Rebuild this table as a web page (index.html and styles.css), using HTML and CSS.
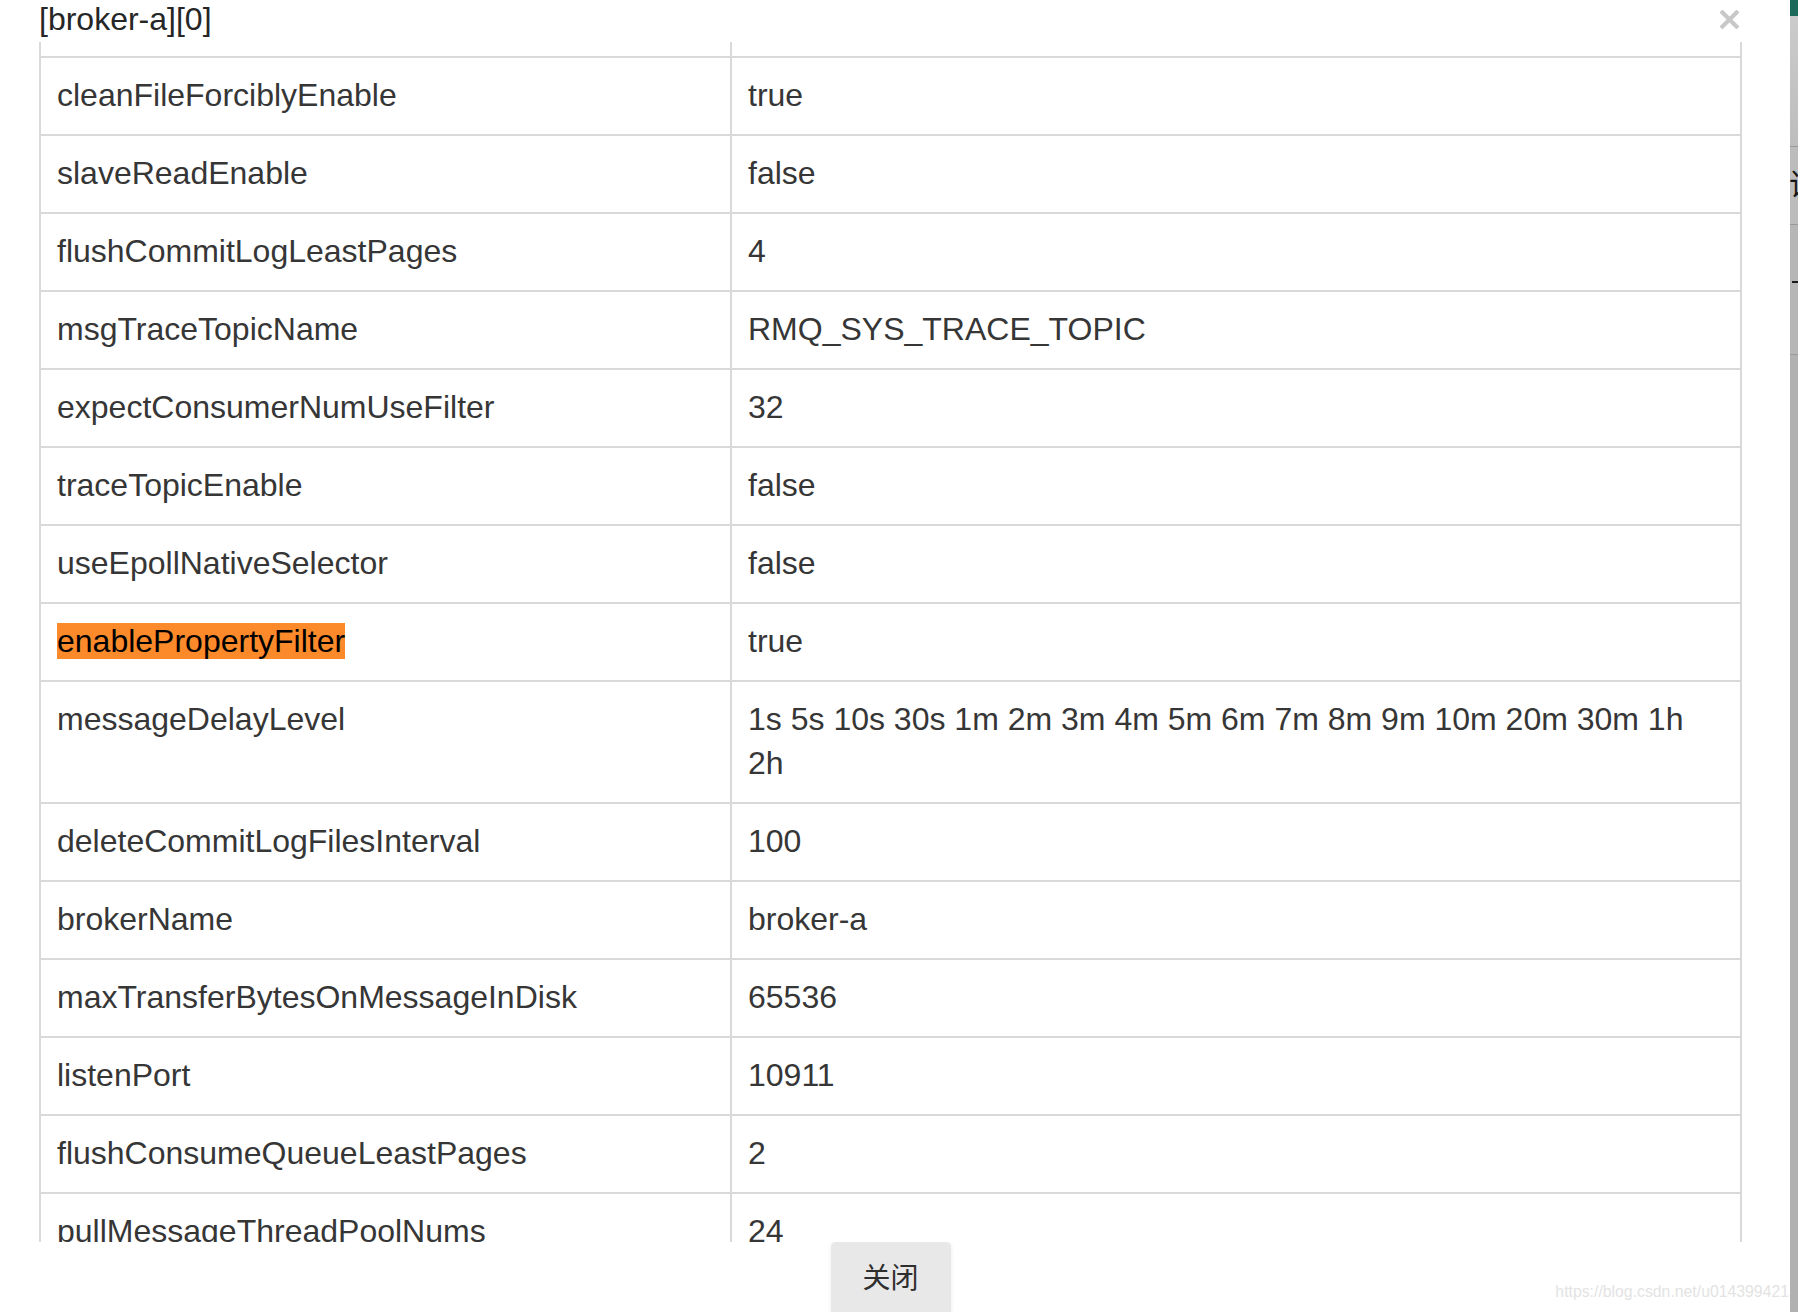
FILE: index.html
```html
<!DOCTYPE html>
<html lang="zh-CN">
<head>
<meta charset="utf-8">
<title>[broker-a][0]</title>
<link rel="stylesheet" href="styles.css">
</head>
<body>
<div class="screen">
  <div class="modal">
    <div class="modal-header">
      <h4 class="modal-title">[broker-a][0]</h4>
      <button class="close" type="button" aria-label="Close">
        <svg width="19" height="19" viewBox="0 0 19 19" aria-hidden="true">
          <path d="M2.5 2.5 L16.5 16.5 M16.5 2.5 L2.5 16.5" stroke="#c8c8c8" stroke-width="4.2" stroke-linecap="square" fill="none"/>
        </svg>
      </button>
    </div>
    <div class="modal-body">
      <table class="config-table">
        <tbody>
          <tr class="scrolled-edge"><td class="key"></td><td></td></tr>
          <tr><td class="key">cleanFileForciblyEnable</td><td>true</td></tr>
          <tr><td class="key">slaveReadEnable</td><td>false</td></tr>
          <tr><td class="key">flushCommitLogLeastPages</td><td>4</td></tr>
          <tr><td class="key">msgTraceTopicName</td><td>RMQ_SYS_TRACE_TOPIC</td></tr>
          <tr><td class="key">expectConsumerNumUseFilter</td><td>32</td></tr>
          <tr><td class="key">traceTopicEnable</td><td>false</td></tr>
          <tr><td class="key">useEpollNativeSelector</td><td>false</td></tr>
          <tr><td class="key"><mark class="hit">enablePropertyFilter</mark></td><td>true</td></tr>
          <tr><td class="key">messageDelayLevel</td><td>1s 5s 10s 30s 1m 2m 3m 4m 5m 6m 7m 8m 9m 10m 20m 30m 1h 2h</td></tr>
          <tr><td class="key">deleteCommitLogFilesInterval</td><td>100</td></tr>
          <tr><td class="key">brokerName</td><td>broker-a</td></tr>
          <tr><td class="key">maxTransferBytesOnMessageInDisk</td><td>65536</td></tr>
          <tr><td class="key">listenPort</td><td>10911</td></tr>
          <tr><td class="key">flushConsumeQueueLeastPages</td><td>2</td></tr>
          <tr><td class="key">pullMessageThreadPoolNums</td><td>24</td></tr>
        </tbody>
      </table>
    </div>
    <div class="modal-footer">
      <button class="btn" type="button">关闭</button>
    </div>
    <div class="watermark">https://blog.csdn.net/u014399421</div>
  </div>
  <div class="page-edge" aria-hidden="true">
    <div class="edge-nav"></div>
    <div class="edge-cell edge-light"></div>
    <div class="edge-cell edge-mid"><span class="edge-char">词</span></div>
    <div class="edge-cell edge-low"><span class="edge-dash"></span></div>
    <div class="edge-rest"></div>
  </div>
</div>
</body>
</html>
```

FILE: styles.css
```css
* {
  box-sizing: border-box;
}

html, body {
  margin: 0;
  padding: 0;
  background: #ffffff;
}

body {
  font-family: "Liberation Sans", "Noto Sans CJK SC", sans-serif;
  color: #333333;
  overflow: hidden;
}

.screen {
  display: flex;
  width: 1798px;
  height: 1312px;
  overflow: hidden;
}

.modal {
  position: relative;
  width: 1790px;
  height: 1312px;
  background: #ffffff;
  display: flex;
  flex-direction: column;
  overflow: hidden;
}

.modal-header {
  height: 42px;
  flex: 0 0 42px;
  display: flex;
  justify-content: space-between;
  align-items: flex-start;
  padding: 0 51px 0 39px;
}

.modal-title {
  margin: 0;
  font-size: 32px;
  line-height: 39px;
  font-weight: normal;
  color: #262626;
}

.close {
  display: block;
  width: 19px;
  height: 19px;
  margin-top: 10px;
  padding: 0;
  border: 0;
  background: none;
  cursor: pointer;
}

.close svg {
  display: block;
}

.modal-body {
  height: 1200px;
  flex: 0 0 1200px;
  overflow: hidden;
  padding: 0 48px 0 39px;
}

.config-table {
  width: 1703px;
  table-layout: fixed;
  border-collapse: separate;
  border-spacing: 0;
  border-right: 2px solid #d9d9d9;
  border-bottom: 2px solid #d9d9d9;
  font-size: 32px;
  line-height: 44px;
}

.config-table td {
  padding: 15px 16px 17px;
  border-top: 2px solid #d9d9d9;
  border-left: 2px solid #d9d9d9;
  vertical-align: top;
  color: #363636;
}

.config-table td.key {
  width: 691px;
}

.config-table .scrolled-edge td {
  height: 14px;
  padding: 0;
  border-top: 0;
  line-height: 14px;
}

.hit {
  background: #fc8a2b;
  color: #000000;
  padding: 0;
}

.modal-footer {
  flex: 1 1 auto;
  overflow: hidden;
  padding: 0 48px 0 39px;
  text-align: center;
}

.btn {
  display: inline-flex;
  align-items: center;
  justify-content: center;
  width: 120px;
  height: 74px;
  padding: 0 0 6px;
  border: 0;
  border-radius: 5px;
  background: #e8e8e8;
  box-shadow: 0 0 4px rgba(0, 0, 0, 0.08);
  font-family: "Noto Sans CJK SC", "Liberation Sans", sans-serif;
  font-size: 28px;
  color: #2e2e2e;
}

.watermark {
  position: absolute;
  right: 1px;
  bottom: 11px;
  font-size: 15.8px;
  line-height: 18px;
  color: #e3e3e3;
  white-space: nowrap;
}

.page-edge {
  width: 8px;
  height: 1312px;
  flex: 0 0 8px;
  display: flex;
  flex-direction: column;
  overflow: hidden;
  background: #b1b1b1;
}

.edge-nav {
  height: 16px;
  flex: 0 0 16px;
  background: #1d6a5b;
}

.edge-cell {
  border-bottom: 1px solid #9a9a9a;
  overflow: hidden;
  white-space: nowrap;
}

.edge-light {
  height: 131px;
  flex: 0 0 131px;
  background: linear-gradient(#cbcbcb, #bdbdbd);
}

.edge-mid {
  height: 78px;
  flex: 0 0 78px;
  background: #bcbcbc;
  font-size: 30px;
  line-height: 76px;
  color: #151515;
}

.edge-char {
  display: inline-block;
  margin-left: -1px;
}

.edge-low {
  height: 130px;
  flex: 0 0 130px;
  background: #b6b6b6;
}

.edge-dash {
  display: block;
  width: 7px;
  height: 2px;
  margin: 56px 0 0 2px;
  background: #1a1a1a;
}

.edge-rest {
  flex: 1 1 auto;
  background: #b1b1b1;
}
```
